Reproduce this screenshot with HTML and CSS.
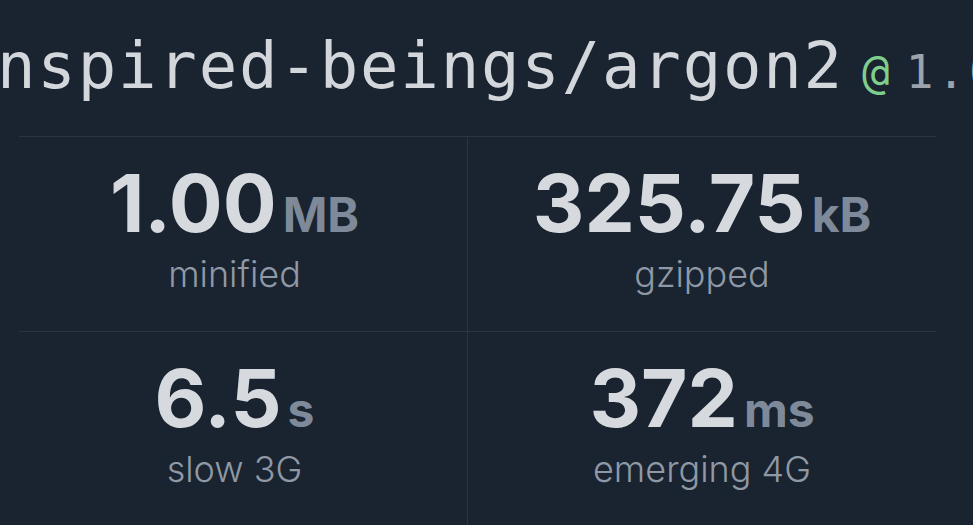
FILE: index.html
```html
<!DOCTYPE html>
<html lang="en">
<head>
  <meta charset="UTF-8">
  <meta name="viewport" content="width=device-width, initial-scale=1">
  <title>inspired-beings/argon2 - bundle size</title>
  <link rel="stylesheet" href="styles.css">
</head>
<body>
  <h1 class="package-name">
    <span class="name">nspired-beings/argon2</span>
    <span class="at">@</span>
    <span class="version">1.0.0</span>
  </h1>

  <div class="stats">
    <div class="stat">
      <div class="value">1.00<span class="unit">MB</span></div>
      <div class="label">minified</div>
    </div>
    <div class="stat">
      <div class="value">325.75<span class="unit">kB</span></div>
      <div class="label">gzipped</div>
    </div>
    <div class="stat">
      <div class="value">6.5<span class="unit">s</span></div>
      <div class="label">slow 3G</div>
    </div>
    <div class="stat">
      <div class="value">372<span class="unit">ms</span></div>
      <div class="label">emerging 4G</div>
    </div>
  </div>
</body>
</html>
```

FILE: styles.css
```css
body { margin: 0; background-color: #1a2330; font-family: Inter, "Noto Sans", sans-serif; overflow: hidden; }

.package-name { display: flex; align-items: baseline; height: 136px; box-sizing: border-box; margin: 0;
  padding-top: 34px; white-space: nowrap; overflow: hidden; font-family: "DejaVu Sans Mono", monospace;
  font-weight: 400; }
.package-name .name { font-size: 64px; letter-spacing: 1.8px; color: #d3d7dc; line-height: 1; margin-left: -3px; }
.package-name .at { font-size: 46px; color: #7fce8c; margin-left: 18px; line-height: 1; }
.package-name .version { font-size: 46px; color: #9ba3ad; margin-left: 16px; letter-spacing: 4px; line-height: 1; }

.stats { display: grid; grid-template-columns: 449px 1fr; margin: 0 37px 0 19px; border-top: 1px solid #2a3442; }
.stat { height: 195px; box-sizing: border-box; padding-top: 26px; text-align: center; }
.stat:nth-child(odd) { border-right: 1px solid #2a3442; padding-right: 17px; }
.stat:nth-child(-n+2) { border-bottom: 1px solid #2a3442; }

.value { font-size: 80px; font-weight: 700; color: #d6dade; line-height: 1; }
.unit { font-size: 48px; color: #7e8a9a; margin-left: 6px; }
.label { font-size: 36px; font-weight: 300; color: #8f99a5; margin-top: 10px; line-height: 1.2; }
```
